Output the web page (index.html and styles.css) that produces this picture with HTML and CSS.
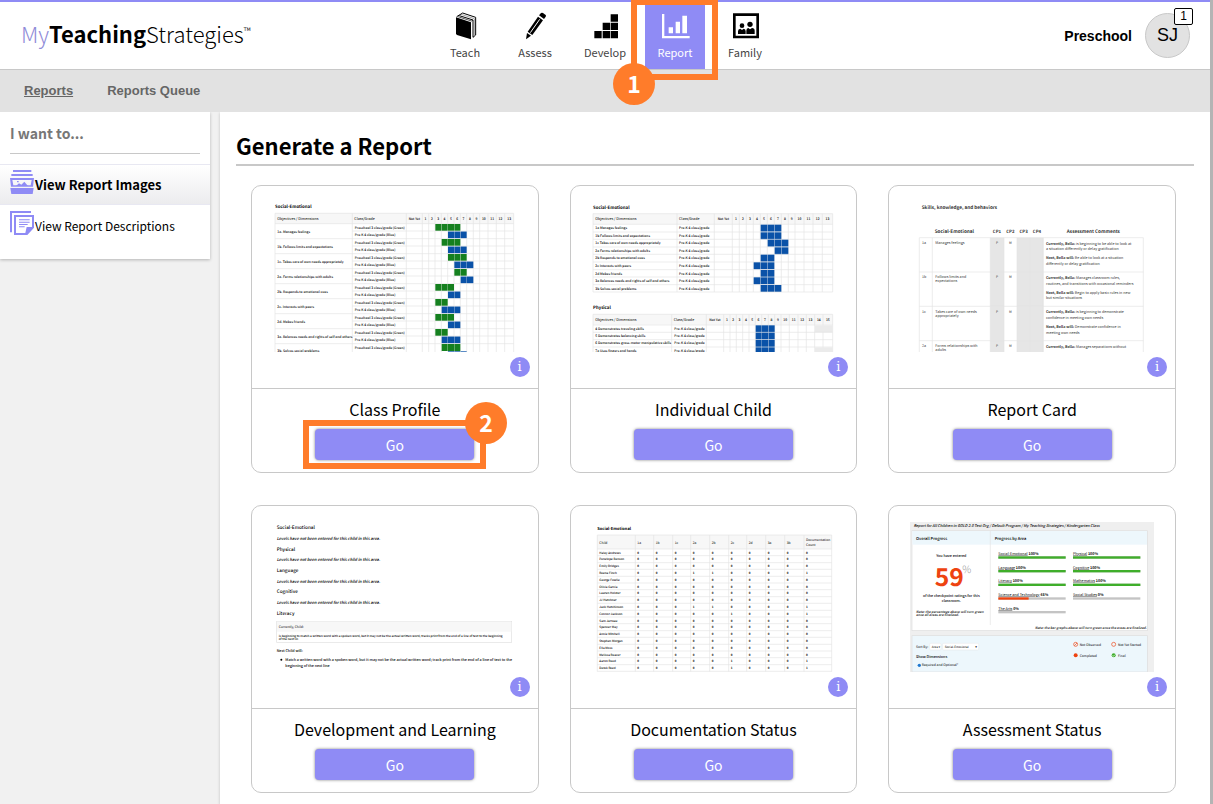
FILE: index.html
```
<!DOCTYPE html>
<html lang="en">
<head>
    <meta charset="UTF-8">
    <meta name="viewport" content="width=device-width, initial-scale=1.0">
    <title>Generate a Report</title>
    <link rel="stylesheet" href="styles.css">
</head>
<body>
    <header class="header">
        <a href="#" class="logo"><span class="logo-my">My</span><b>Teaching</b>Strategies<sup>™</sup></a>
        <nav class="main-nav">
            <a href="#" class="nav-item">
                <svg viewBox="0 0 84 84" aria-hidden="true">
                    <path d="M15 16 L60 31 V82 L18 69 Q15 68 15 64 Z"/>
                    <path d="M17 14 L35 3 L74 16 V69 L66 76 V24 L25 11" fill="none" stroke="#000" stroke-width="3"/>
                    <path d="M30 7 L70 20 V72" fill="none" stroke="#777" stroke-width="2"/>
                    <path d="M21 14 L61 27 L66 24" fill="none" stroke="#000" stroke-width="2"/>
                </svg>
                <span>Teach</span>
            </a>
            <a href="#" class="nav-item">
                <svg viewBox="0 0 84 84" aria-hidden="true">
                    <path d="M15 82 L18 63 L30 71 Z"/>
                    <path d="M20 59 L51 14 L66 25 L34 69 Z"/>
                    <path d="M54 10 L60 3 Q63 1 66 3 L74 9 Q76 11 74 14 L69 21 Z"/>
                    <path d="M28 62 L56 22" stroke="#fff" stroke-width="3"/>
                </svg>
                <span>Assess</span>
            </a>
            <a href="#" class="nav-item">
                <svg viewBox="0 0 84 84" aria-hidden="true">
                    <path d="M10 57h22v22h-22z M35 57h22v22h-22z M59 57h22v22h-22z M35 32h22v22h-22z M59 32h22v22h-22z M59 7h22v22h-22z"/>
                </svg>
                <span>Develop</span>
            </a>
            <a href="#" class="nav-item active">
                <svg viewBox="0 0 84 84" aria-hidden="true">
                    <path d="M3 6h7v66h76v7H3z M23 46h13v18H23z M44 29h13v35H44z M64 11h14v53H64z"/>
                </svg>
                <span>Report</span>
                <span class="step-box step-one"><b class="step-number">1</b></span>
            </a>
            <a href="#" class="nav-item">
                <svg viewBox="0 0 84 84" aria-hidden="true">
                    <path fill-rule="evenodd" d="M6 4h78v75H6z M14 12v59h62V12z"/>
                    <circle cx="33" cy="41" r="7"/>
                    <circle cx="57" cy="37" r="8"/>
                    <path d="M21 66v-8q0-7 7-8l5 4 5-4q6 1 6 8v8z M46 66v-10q0-8 6-8l5 4 6-4q8 0 8 8v10z"/>
                </svg>
                <span>Family</span>
            </a>
        </nav>
        <div class="user">
            <span class="user-class">Preschool</span>
            <button type="button" class="avatar">SJ<span class="avatar-count">1</span></button>
        </div>
    </header>

    <nav class="sub-nav">
        <a href="#" class="current">Reports</a>
        <a href="#">Reports Queue</a>
    </nav>

    <div class="page">
        <aside class="sidebar">
            <h2>I want to...</h2>
            <a href="#" class="side-link selected">
                <svg viewBox="0 0 72 72" aria-hidden="true">
                    <path d="M9 0h55v6H9z M4 12h64v6H4z"/>
                    <path fill-rule="evenodd" d="M0 24h72l-3 26H3z M7 30l3 16h52l3-16z"/>
                    <path d="M1 54h70l-3 18H4z M18 48l9-8 7 4 9-9 11 13z M21 33h5v4h-5z"/>
                </svg>
                <span>View Report Images</span>
            </a>
            <a href="#" class="side-link">
                <svg viewBox="0 0 72 72" aria-hidden="true">
                    <path d="M0 0h63v6H6v58H0z"/>
                    <path fill-rule="evenodd" d="M12 12h60v38L52 72H12z M18 18v48h28l4-18h16V18z"/>
                    <path d="M27 25h32v3H27z M27 32h32v3H27z M27 39h26v3H27z M27 46h17v3H27z"/>
                </svg>
                <span>View Report Descriptions</span>
            </a>
        </aside>

        <main class="content">
            <h1>Generate a Report</h1>
            <div class="cards">
                <section class="card">
                    <div class="preview">
                        <svg class="thumb" id="classProfile" viewBox="66 66 735 450" role="img" aria-label="Class Profile preview"></svg>
                        <button type="button" class="info" aria-label="About Class Profile">i</button>
                    </div>
                    <h3>Class Profile</h3>
                    <div class="go-wrap">
                        <button type="button" class="go">Go</button>
                        <span class="step-box step-two"><b class="step-number">2</b></span>
                    </div>
                </section>
                <section class="card">
                    <div class="preview">
                        <svg class="thumb" id="individualChild" viewBox="69 66 735 450" role="img" aria-label="Individual Child preview"></svg>
                        <button type="button" class="info" aria-label="About Individual Child">i</button>
                    </div>
                    <h3>Individual Child</h3>
                    <div class="go-wrap"><button type="button" class="go">Go</button></div>
                </section>
                <section class="card">
                    <div class="preview">
                        <svg class="thumb" id="reportCard" viewBox="72 66 735 450" role="img" aria-label="Report Card preview"></svg>
                        <button type="button" class="info" aria-label="About Report Card">i</button>
                    </div>
                    <h3>Report Card</h3>
                    <div class="go-wrap"><button type="button" class="go">Go</button></div>
                </section>
                <section class="card">
                    <div class="preview">
                        <svg class="thumb" id="development" viewBox="66 66 735 450" role="img" aria-label="Development and Learning preview"></svg>
                        <button type="button" class="info" aria-label="About Development and Learning">i</button>
                    </div>
                    <h3>Development and Learning</h3>
                    <div class="go-wrap"><button type="button" class="go">Go</button></div>
                </section>
                <section class="card">
                    <div class="preview">
                        <svg class="thumb" id="documentation" viewBox="69 66 735 450" role="img" aria-label="Documentation Status preview"></svg>
                        <button type="button" class="info" aria-label="About Documentation Status">i</button>
                    </div>
                    <h3>Documentation Status</h3>
                    <div class="go-wrap"><button type="button" class="go">Go</button></div>
                </section>
                <section class="card">
                    <div class="preview">
                        <svg class="thumb" id="assessment" viewBox="72 66 735 450" role="img" aria-label="Assessment Status preview"></svg>
                        <button type="button" class="info" aria-label="About Assessment Status">i</button>
                    </div>
                    <h3>Assessment Status</h3>
                    <div class="go-wrap"><button type="button" class="go">Go</button></div>
                </section>
            </div>
        </main>
    </div>
    <script src="previews.js"></script>
</body>
</html>
```
FILE: styles.css
```
* {
    box-sizing: border-box;
}
body {
    margin: 0;
    min-height: 100vh;
    font-family: "Noto Sans CJK SC", "Noto Sans", sans-serif;
    background-color: #f1f1f1;
    border-right: 3px solid #b4b4b4;
    color: #000;
}
a {
    color: inherit;
    text-decoration: none;
}
button {
    font-family: inherit;
    padding: 0;
    border: none;
    cursor: pointer;
}

/* Header */
.header {
    display: grid;
    grid-template-columns: 1fr auto 1fr;
    height: 70px;
    background-color: #fff;
    border-top: 2px solid #8f8bf5;
    border-bottom: 1px solid #c8c8c8;
}
.logo {
    padding: 15px 0 0 21px;
    font-size: 22px;
    font-weight: 300;
    line-height: 32px;
    white-space: nowrap;
}
.logo b {
    font-weight: 700;
}
.logo-my {
    color: #8f8bd8;
}
.logo sup {
    font-size: 10px;
    line-height: 10px;
    vertical-align: 8px;
}
.main-nav {
    display: flex;
    gap: 10px;
}
.nav-item {
    position: relative;
    width: 60px;
    padding-top: 10px;
    display: flex;
    flex-direction: column;
    align-items: center;
    font-size: 11px;
    line-height: 24px;
    color: #444;
}
.nav-item svg {
    width: 28px;
    height: 28px;
    overflow: visible;
    fill: #000;
}
.nav-item.active {
    background-color: #8f8bf5;
    color: #fff;
}
.nav-item.active svg {
    fill: #fff;
}
.user {
    display: flex;
    justify-content: flex-end;
    align-items: center;
    gap: 13px;
    padding-right: 20px;
    font-family: "Liberation Sans", Arial, sans-serif;
}
.user-class {
    font-size: 14px;
    font-weight: bold;
}
.avatar {
    position: relative;
    width: 45px;
    height: 45px;
    border: 1px solid #c8c8c8;
    border-radius: 50%;
    background-color: #e2e2e2;
    font-family: inherit;
    font-size: 18px;
    color: #000;
}
.avatar-count {
    position: absolute;
    top: -6px;
    right: -4px;
    width: 19px;
    height: 17px;
    border: 1px solid #000;
    border-radius: 2px;
    background-color: #fff;
    font-size: 12px;
    line-height: 15px;
}

/* Numbered steps drawn over the page */
.step-box {
    position: absolute;
    z-index: 2;
    border: 6px solid #ff7c2a;
    pointer-events: none;
}
.step-one {
    top: -3px;
    left: -14px;
    width: 87px;
    height: 81px;
}
.step-two {
    top: -9px;
    left: 51px;
    width: 183px;
    height: 49px;
}
.step-number {
    position: absolute;
    width: 42px;
    height: 42px;
    border-radius: 50%;
    background-color: #ff7c2a;
    color: #fff;
    font-size: 23px;
    line-height: 40px;
    text-align: center;
}
.step-one .step-number {
    left: -24px;
    bottom: -31px;
}
.step-two .step-number {
    top: -24px;
    right: -27px;
}

.sub-nav {
    display: flex;
    align-items: center;
    gap: 34px;
    height: 42px;
    padding: 0 0 2px 24px;
    background-color: #e2e2e2;
    font-family: "Liberation Sans", Arial, sans-serif;
    font-size: 13px;
    font-weight: bold;
    color: #666;
}
.sub-nav .current {
    text-decoration: underline;
}

/* Sidebar */
.page {
    display: flex;
    align-items: flex-start;
    gap: 10px;
}
.sidebar {
    flex: 0 0 210px;
    padding-bottom: 13px;
    background-color: #fff;
    box-shadow: 0 1px 3px rgba(0, 0, 0, 0.25);
    clip-path: inset(0 -6px -6px 0);
}
.sidebar h2 {
    margin: 0 10px 10px;
    height: 42px;
    border-bottom: 1px solid #c8c8c8;
    font-size: 14px;
    line-height: 42px;
    color: #777;
}
.side-link {
    display: flex;
    align-items: center;
    gap: 1px;
    height: 41px;
    padding-left: 10px;
    font-size: 12px;
}
.side-link svg {
    width: 24px;
    height: 24px;
    margin-bottom: 6px;
    fill: #8f8bf5;
}
.side-link.selected {
    border-top: 1px solid #e8e8f2;
    border-bottom: 1px solid #e8e8f2;
    background: linear-gradient(#fff, #ececee);
    font-size: 13px;
    font-weight: bold;
}

/* Reports */
.content {
    flex: 1;
    min-height: calc(100vh - 112px);
    padding: 16px 16px 11px;
    background-color: #fff;
    box-shadow: 0 1px 3px rgba(0, 0, 0, 0.2);
    clip-path: inset(0 0 0 -6px);
}
.content h1 {
    margin: 0;
    height: 38px;
    border-bottom: 2px solid #c8c8c8;
    font-size: 22px;
    line-height: 35px;
}
.cards {
    display: grid;
    grid-template-columns: repeat(3, 1fr);
    gap: 32px 31px;
    padding: 19px 18px 0 15px;
}
.card {
    height: 288px;
    border: 1px solid #c8c8c8;
    border-radius: 10px;
}
.preview {
    position: relative;
    height: 203px;
    padding-top: 16px;
    border-bottom: 1px solid #c8c8c8;
    text-align: center;
}
.thumb {
    width: 245px;
    height: 150px;
    font-family: "Noto Sans CJK SC", "Noto Sans", sans-serif;
    text-rendering: geometricPrecision;
}
.info {
    position: absolute;
    right: 8px;
    bottom: 11px;
    width: 20px;
    height: 20px;
    border-radius: 50%;
    background-color: #8f8bf5;
    color: #fff;
    font-family: "DejaVu Serif", serif;
    font-size: 13px;
    line-height: 20px;
}
.card h3 {
    margin: 7px 0;
    font-size: 16px;
    font-weight: normal;
    line-height: 26px;
    text-align: center;
}
.go-wrap {
    position: relative;
    text-align: center;
}
.go {
    width: 159px;
    height: 31px;
    border-radius: 4px;
    background-color: #8f8bf5;
    box-shadow: 0 0 3px rgba(0, 0, 0, 0.5);
    color: #fff;
    font-size: 14px;
    line-height: 30px;
}
```
FILE: previews.js
```
// Small helpers to draw the report thumbnails
function text(x, y, value, size, attrs) {
    return `<text x="${x}" y="${y}" font-size="${size}" ${attrs || ''}>${value}</text>`;
}

function rect(x, y, w, h, fill, attrs) {
    return `<rect x="${x}" y="${y}" width="${w}" height="${h}" fill="${fill}" ${attrs || ''}/>`;
}

function line(x1, y1, x2, y2) {
    return `<path d="M${x1} ${y1}L${x2} ${y2}" stroke="#e4e4e4" stroke-width="2"/>`;
}

function draw(id, parts) {
    document.getElementById(id).innerHTML = parts.join('');
}

const BOLD = ' font-weight="bold"';
const MEDIUM = ' font-weight="500"';
const ITALIC = ' font-style="italic" font-weight="500"';
const MIDDLE = ' text-anchor="middle"';
const GREEN = '#15801f';
const BLUE = '#0a52a8';

// Table frame: header band, column lines and level numbers
function levelTable(top, bottom, cols, right) {
    const parts = [rect(75, top, right - 75, 31, '#f7f7f7'), line(75, top, right, top)];
    cols.forEach(x => parts.push(line(x, top, x, bottom)));
    parts.push(line(right, top, right, bottom));
    parts.push(text(82, top + 19, 'Objectives / Dimensions', 11));
    parts.push(text(cols[1] + 6, top + 19, 'Class/Grade', 11));
    parts.push(text((cols[2] + cols[3]) / 2, top + 19, 'Not Yet', 10, MEDIUM + MIDDLE));
    cols.slice(3).forEach((x, i) => {
        const next = cols[i + 4] || right;
        parts.push(text((x + next) / 2, top + 19, i + 1, 10, MEDIUM + MIDDLE));
    });
    return parts;
}

function levels(cols, right, from, to, y, fill) {
    const parts = [];
    for (let i = from; i <= to; i++) {
        const x = cols[i + 2];
        parts.push(rect(x + 1, y + 1, (cols[i + 3] || right) - x - 1, 21, fill));
    }
    return parts.join('');
}

function classProfile() {
    const cols = [75, 307, 469, 517, 536, 555, 574, 593, 612, 631, 650, 670, 689, 714, 739, 764];
    const parts = [text(75, 85, 'Social-Emotional', 13, BOLD)].concat(levelTable(100, 516, cols, 791));
    const rows = [
        ['1a. Manages feelings', 3, 6, 5, 7],
        ['1b. Follows limits and expectations', 4, 6, 5, 7],
        ['1c. Takes care of own needs appropriately', 5, 7, 6, 8],
        ['2a. Forms relationships with adults', 6, 7, 7, 8],
        ['2b. Responds to emotional cues', 3, 5, 5, 6],
        ['2c. Interacts with peers', 3, 4, 4, 6],
        ['2d. Makes friends', 3, 5, 5, 6],
        ['3a. Balances needs and rights of self and others', 3, 4, 4, 6],
        ['3b. Solves social problems', 4, 6, 5, 7]
    ];
    rows.forEach((row, i) => {
        const y = 131 + i * 45;
        parts.push(line(75, y, 791, y));
        parts.push(text(82, i === 8 ? y + 25 : y + 27, row[0], 10, MEDIUM));
        parts.push(text(314, y + 15, 'Preschool 3 class/grade (Green)', 10, MEDIUM));
        parts.push(levels(cols, 791, row[1], row[2], y, GREEN));
        parts.push(levels(cols, 791, row[3], row[4], y + 22, BLUE));
        // The last row is cut after its first class
        if (i < 8) {
            parts.push(line(307, y + 22, 791, y + 22));
            parts.push(text(314, y + 38, 'Pre-K 4 class/grade (Blue)', 10, MEDIUM));
        }
    });
    draw('classProfile', parts);
}

function individualChild() {
    const cols = [75, 327, 439, 493, 514, 535, 556, 577, 598, 619, 640, 661, 681, 708, 735, 763];
    const cols2 = [75, 311, 415, 467, 486, 505, 524, 543, 562, 581, 601, 620, 639, 664, 690, 715, 740, 765];
    const parts = [text(75, 86, 'Social-Emotional', 13, BOLD)].concat(levelTable(101, 336, cols, 794));
    const social = [
        ['1a Manages feelings', 5, 7],
        ['1b Follows limits and expectations', 5, 7],
        ['1c Takes care of own needs appropriately', 6, 8],
        ['2a Forms relationships with adults', 7, 8],
        ['2b Responds to emotional cues', 5, 6],
        ['2c Interacts with peers', 4, 6],
        ['2d Makes friends', 5, 6],
        ['3a Balances needs and rights of self and others', 4, 6],
        ['3b Solves social problems', 5, 7]
    ];
    const physical = [
        '4 Demonstrates traveling skills',
        '5 Demonstrates balancing skills',
        '6 Demonstrates gross-motor manipulative skills',
        '7a Uses fingers and hands'
    ];
    social.forEach((row, i) => {
        const y = 133 + Math.round(i * 22.6);
        parts.push(line(75, y, 794, y));
        parts.push(text(82, y + 15, row[0], 10, MEDIUM), text(333, y + 15, 'Pre-K 4 class/grade', 10, MEDIUM));
        parts.push(levels(cols, 794, row[1], row[2], y, BLUE));
    });
    parts.push(line(75, 336, 794, 336));
    parts.push(text(75, 388, 'Physical', 13, BOLD));
    parts.push(...levelTable(403, 516, cols2, 794));
    physical.forEach((name, i) => {
        const y = 435 + i * 22;
        parts.push(line(75, y, 794, y));
        parts.push(text(82, y + 14, name, 10, MEDIUM), text(319, y + 14, 'Pre-K 4 class/grade', 10, MEDIUM));
        parts.push(levels(cols2, 794, 6, 8, y, BLUE));
        if (i === 0 || i === 3) {
            parts.push(rect(741, y + 1, 53, 21, '#ebebeb'));
        }
    });
    draw('individualChild', parts);
}

function reportCard() {
    const parts = [
        text(107, 87, 'Skills, knowledge, and behaviors', 14, BOLD),
        text(146, 158, 'Social-Emotional', 14, BOLD),
        text(622, 158, 'Assessment Comments', 14, BOLD + MIDDLE),
        rect(313, 173, 41, 343, '#e6e6e6'),
        rect(393, 173, 79, 343, '#e6e6e6')
    ];
    ['CP1', 'CP2', 'CP3', 'CP4'].forEach((name, i) => {
        parts.push(text(333 + i * 40, 158, name, 13, BOLD + MIDDLE));
    });
    [100, 139, 313, 354, 393, 432, 472, 772].forEach(x => parts.push(line(x, 173, x, 516)));
    const rows = [
        ['1a', 'Manages feelings', '', 'is beginning to be able to look at', 'a situation differently or delay gratification', 'Be able to look at a situation', 'differently or delay gratification'],
        ['1b', 'Follows limits and', 'expectations', 'Manages classroom rules,', 'routines, and transitions with occasional reminders', 'Begin to apply basic rules in new', 'but similar situations'],
        ['1c', 'Takes care of own needs', 'appropriately', 'is beginning to demonstrate', 'confidence in meeting own needs', 'Demonstrate confidence in', 'meeting own needs'],
        ['2a', 'Forms relationships with', 'adults', 'Manages separations without', '', '', '']
    ];
    rows.forEach((row, i) => {
        const y = 173 + i * 103;
        parts.push(line(100, y, 772, y));
        parts.push(text(108, y + 19, row[0], 11), text(148, y + 19, row[1], 11), text(148, y + 31, row[2], 11));
        parts.push(text(333, y + 19, 'P', 10, MIDDLE), text(373, y + 19, 'M', 10, MIDDLE));
        parts.push(text(480, y + 21, `<tspan font-weight="bold">Currently, Bella:</tspan> ${row[3]}`, 11));
        if (row[4]) {
            parts.push(text(480, y + 38, row[4], 11));
            parts.push(text(480, y + 65, `<tspan font-weight="bold">Next, Bella will:</tspan> ${row[5]}`, 11));
            parts.push(text(480, y + 82, row[6], 11));
        }
    });
    draw('reportCard', [`<g fill="#333">${parts.join('')}</g>`]);
}

function development() {
    const parts = [];
    ['Social-Emotional', 'Physical', 'Language', 'Cognitive'].forEach((name, i) => {
        parts.push(text(80, 88 + i * 64, name, 14, MEDIUM));
        parts.push(text(80, 120 + i * 64, 'Levels have not been entered for this child in this area.', 12, ITALIC));
    });
    parts.push(text(80, 345, 'Literacy', 14, MEDIUM));
    parts.push(rect(80, 364, 705, 63, '#fff', 'stroke="#e0e0e0" stroke-width="2"'));
    parts.push(rect(81, 365, 703, 30, '#f7f7f7'));
    parts.push(text(86, 384, 'Currently, Child:', 10));
    parts.push(text(86, 411, 'is beginning to match a written word with a spoken word, but it may not be the actual written word; tracks print from the end of a line of text to the beginning', 9, MEDIUM));
    parts.push(text(86, 420, 'of the next lin', 9, MEDIUM));
    parts.push(text(80, 455, 'Next Child will:', 11, MEDIUM));
    parts.push('<circle cx="94" cy="479" r="3"/>');
    parts.push(text(106, 483, 'Match a written word with a spoken word, but it may not be the actual written word; track print from the end of a line of text to the', 11, MEDIUM));
    parts.push(text(106, 500, 'beginning of the next line', 11, MEDIUM));
    draw('development', parts);
}

function documentation() {
    const cols = [88, 202, 257, 314, 368, 425, 482, 536, 593, 650, 708];
    const names = ['Haley Andrews', 'Penelope Benson', 'Emily Bridges', 'Reena Finch', 'George Fowlie', 'Olivia Garcia', 'Lauren Holster', 'JJ Hutchner', 'Jack Hutchinson', 'Connor Jackson', 'Sam Jarreau', 'Spencer May', 'Annie Mitchell', 'Stephen Morgan', 'Ella Moss', 'Melissa Reaver', 'Aaron Reed', 'Derek Reed'];
    // Row index -> columns holding a document
    const filled = { 3: [4, 5, 10], 8: [4, 5, 10], 9: [6, 10], 16: [6, 10], 17: [6, 10] };
    const parts = [text(88, 89, 'Social-Emotional', 12, BOLD), rect(88, 105, 703, 42, '#f7f7f7')];
    cols.forEach(x => parts.push(line(x, 105, x, 515)));
    parts.push(line(791, 105, 791, 515), line(88, 105, 791, 105), line(88, 514, 791, 514));
    ['Child', '1a', '1b', '1c', '2a', '2b', '2c', '2d', '3a', '3b'].forEach((name, i) => {
        parts.push(text(cols[i] + 6, 131, name, 10));
    });
    parts.push(text(714, 122, 'Documentation', 10), text(714, 137, 'Count', 10));
    names.forEach((name, i) => {
        const y = 147 + Math.round(i * 20.4);
        parts.push(line(88, y, 791, y), text(94, y + 14, name, 9, MEDIUM));
        cols.slice(1).forEach((x, c) => {
            const has = filled[i] && filled[i].includes(c + 1);
            parts.push(text(x + 6, y + 14, has ? 1 : 0, 9, BOLD));
        });
    });
    draw('documentation', parts);
}

function assessment() {
    const parts = [
        rect(69, 66, 735, 450, '#efefef'),
        text(83, 82, 'Report for All Children in GOLD 2.0 Test Org / Default Program / My Teaching Strategies / Kindergarten Class', 11, ITALIC),
        rect(78, 92, 706, 300, '#fff', 'stroke="#ddd" stroke-width="2"'),
        rect(79, 93, 704, 41, '#edf7fc'),
        line(313, 93, 313, 375),
        text(90, 120, 'Overall Progress', 12, MEDIUM),
        text(326, 120, 'Progress by Area', 12, MEDIUM),
        text(196, 170, 'You have entered', 11, MEDIUM + MIDDLE),
        text(146, 257, '59', 74, 'fill="#ee4310" font-weight="700"'),
        text(229, 219, '%', 30, 'fill="#999" font-weight="300"'),
        text(196, 290, 'of the checkpoint ratings for this', 11, MEDIUM + MIDDLE),
        text(196, 307, 'classroom.', 11, MEDIUM + MIDDLE),
        text(90, 338, 'Note: the percentage above will turn green', 10, ITALIC),
        text(90, 348, 'once all areas are finalized.', 10, ITALIC),
        text(782, 387, 'Note: the bar graphs above will turn green once the areas are finalized.', 10, ITALIC + ' text-anchor="end"'),
        rect(78, 407, 706, 109, '#edf7fc', 'stroke="#ddd" stroke-width="2"'),
        text(90, 443, 'Sort By:', 10),
        rect(131, 430, 34, 20, '#fff', 'rx="3" stroke="#ddd"'),
        text(137, 443, 'Area ▾', 9),
        rect(170, 430, 108, 20, '#fff', 'rx="3" stroke="#ddd"'),
        text(176, 443, 'Social-Emotional', 9),
        text(268, 444, '▾', 10),
        text(90, 475, 'Show Dimensions', 11, MEDIUM),
        '<circle cx="100" cy="496" r="5" fill="#1f78d1"/>',
        text(107, 499, 'Required and Optional*', 10)
    ];
    const areas = [
        ['Social-Emotional', 100], ['Physical', 100],
        ['Language', 100], ['Cognitive', 100],
        ['Literacy', 100], ['Mathematics', 100],
        ['Science and Technology', 45], ['Social Studies', 0],
        ['The Arts', 0]
    ];
    areas.forEach((area, i) => {
        const x = i % 2 ? 561 : 337;
        const y = 165 + Math.floor(i / 2) * 41;
        parts.push(text(x, y, `<tspan text-decoration="underline">${area[0]}</tspan> <tspan font-weight="bold">${area[1]}%</tspan>`, 11));
        parts.push(rect(x, y + 4, 202, 7, '#c4c4c4'));
        parts.push(rect(x, y + 4, area[1] * 2.02, 7, area[1] === 100 ? '#3fae2a' : '#ee4310'));
    });
    parts.push('<g fill="none" stroke="#ee4310" stroke-width="2"><circle cx="569" cy="433" r="6"/><path d="M565 437l8-8"/><circle cx="683" cy="433" r="6"/></g>');
    parts.push('<circle cx="569" cy="466" r="6" fill="#ee4310"/><circle cx="683" cy="466" r="6" fill="#3fae2a"/><path d="M680 466l2 3 5-5" fill="none" stroke="#fff" stroke-width="2"/>');
    parts.push(text(581, 437, 'Not Observed', 10), text(696, 437, 'Not Yet Started', 10));
    parts.push(text(581, 470, 'Completed', 10), text(696, 470, 'Final', 10));
    draw('assessment', parts);
}

classProfile();
individualChild();
reportCard();
development();
documentation();
assessment();
```
